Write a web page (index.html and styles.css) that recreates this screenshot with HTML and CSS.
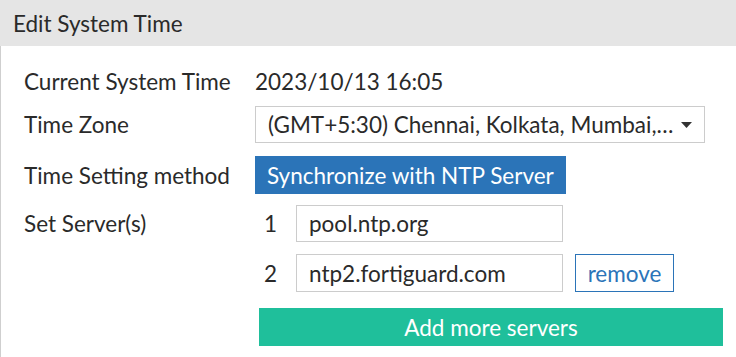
FILE: index.html
```html
<!DOCTYPE html>
<html>
<head>
<meta charset="utf-8">
<link rel="stylesheet" href="styles.css">
</head>
<body>
<div class="panel">
  <div class="header">Edit System Time</div>
  <div class="content">
    <div class="row r1">
      <div class="label">Current System Time</div>
      <div class="value">2023/10/13 16:05</div>
    </div>
    <div class="row r2">
      <div class="label">Time Zone</div>
      <div class="select">
        <span class="select-text">(GMT+5:30) Chennai, Kolkata, Mumbai,…</span>
        <svg class="caret" width="11" height="6" viewBox="0 0 11 6"><path d="M0 0 H11 L5.5 6 Z" fill="#333"/></svg>
      </div>
    </div>
    <div class="row r3">
      <div class="label">Time Setting method</div>
      <div class="btn-blue">Synchronize with NTP Server</div>
    </div>
    <div class="row r4">
      <div class="label">Set Server(s)</div>
      <div class="server">
        <span class="num">1</span>
        <div class="input">pool.ntp.org</div>
      </div>
    </div>
    <div class="row r5">
      <div class="label"></div>
      <div class="server">
        <span class="num">2</span>
        <div class="input">ntp2.fortiguard.com</div>
        <div class="btn-remove">remove</div>
      </div>
    </div>
    <div class="row r6">
      <div class="label"></div>
      <div class="btn-green">Add more servers</div>
    </div>
  </div>
</div>
</body>
</html>
```

FILE: styles.css
```css
html, body {
  margin: 0;
  padding: 0;
  background: #fff;
}
body {
  font-family: Lato, "Open Sans", sans-serif;
  font-size: 22.5px;
  color: #2a2a2a;
}
.panel {
  width: 736px;
  height: 357px;
  overflow: hidden;
}
.header {
  height: 46px;
  background: #e5e5e5;
  box-sizing: border-box;
  padding-left: 13px;
  display: flex;
  align-items: center;
  color: #2a2a2a;
}
.content {
  border-left: 1px solid #cfcfcf;
  height: 311px;
  box-sizing: border-box;
  padding: 16px 0 0 23px;
}
.row {
  display: flex;
  align-items: center;
}
.label {
  width: 231px;
  flex: none;
  white-space: nowrap;
}
.r1 { height: 38px; }
.r2 { margin-top: 6px; height: 37px; }
.r3 { margin-top: 13px; height: 38px; }
.r4 { margin-top: 11px; height: 37px; }
.r5 { margin-top: 12px; height: 38px; }
.r6 { margin-top: 16px; height: 38px; }
.select {
  width: 450px;
  height: 37px;
  box-sizing: border-box;
  border: 1px solid #cccccc;
  display: flex;
  align-items: center;
  padding: 0 12px 0 12px;
  justify-content: space-between;
}
.select-text { white-space: nowrap; }
.caret { flex: none; }
.btn-blue {
  width: 311px;
  height: 38px;
  box-sizing: border-box;
  background: #2b74b8;
  color: #fff;
  display: flex;
  align-items: center;
  padding-left: 12px;
  white-space: nowrap;
}
.server {
  display: flex;
  align-items: center;
  height: 100%;
}
.num {
  width: 41px;
  box-sizing: border-box;
  padding-left: 9px;
}
.input {
  width: 267px;
  height: 37px;
  box-sizing: border-box;
  border: 1px solid #cccccc;
  display: flex;
  align-items: center;
  padding-left: 12px;
}
.r5 .input, .r5 .btn-remove { height: 38px; }
.btn-remove {
  margin-left: 12px;
  width: 99px;
  box-sizing: border-box;
  border: 1px solid #2b74b8;
  color: #2b74b8;
  display: flex;
  align-items: center;
  justify-content: center;
}
.btn-green {
  margin-left: 4px;
  width: 464px;
  height: 38px;
  background: #1fbf9b;
  color: #fff;
  display: flex;
  align-items: center;
  justify-content: center;
}
```
